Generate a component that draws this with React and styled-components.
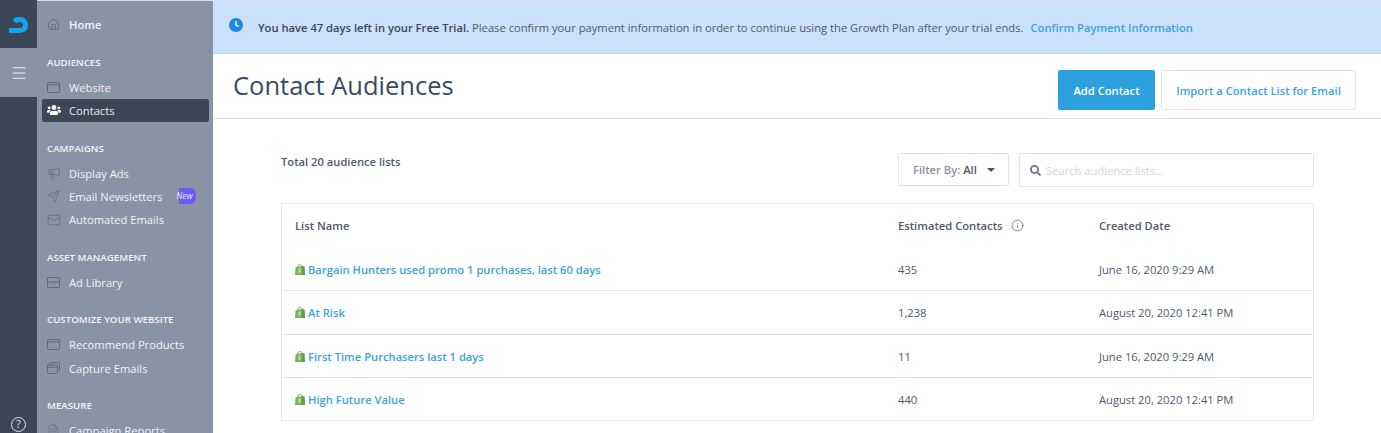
import styled, { createGlobalStyle } from "styled-components";
import { Home, Megaphone, Send, Mail, FileText, Menu, Info } from "lucide-react";
import { FaUsers, FaSearch } from "react-icons/fa";

const GlobalStyle = createGlobalStyle`
  html, body {
    margin: 0;
    padding: 0;
    height: 100%;
    overflow: hidden;
    background: #fff;
    font-family: "Open Sans", "Noto Sans", sans-serif;
  }
  * { box-sizing: border-box; }
`;

const rows = [
  { name: "Bargain Hunters used promo 1 purchases, last 60 days", count: "435", date: "June 16, 2020 9:29 AM" },
  { name: "At Risk", count: "1,238", date: "August 20, 2020 12:41 PM" },
  { name: "First Time Purchasers last 1 days", count: "11", date: "June 16, 2020 9:29 AM" },
  { name: "High Future Value", count: "440", date: "August 20, 2020 12:41 PM" },
];

const Shopify = () => (
  <svg width="10" height="11" viewBox="0 0 10 11">
    <path d="M0.6 3.2L6.5 2l3 .6.4 8.4H0z" fill="#7ab55c" />
    <path d="M7 2.2V11h2.9L9.4 2.6z" fill="#5e9e46" />
    <path d="M2.8 3C2.8 1 3.8 0.3 5 0.3S7 1 7 2.8" stroke="#7ab55c" strokeWidth="1" fill="none" />
    <path d="M5.6 5.2C4.6 4.8 3.5 5.2 3.8 6.1c.3.7 1.6.7 1.4 1.6-.2.7-1.2.6-1.9.3" stroke="#fff" strokeWidth="0.9" fill="none" />
  </svg>
);

const Logo = () => (
  <svg width="20" height="18" viewBox="0 0 20 18">
    <path
      d="M3.5 3.5C5.5 1.5 8 1 10.5 1 15.5 1 19 4 19 9s-3.5 8-8.5 8H0v-5h10.5c2 0 3.5-1 3.5-3s-1.5-3-3.5-3C9 6 8 6.5 7 7.5z"
      fill="#12a5e8"
    />
  </svg>
);

const ClockIcon = () => (
  <svg width="14" height="14" viewBox="0 0 14 14">
    <circle cx="7" cy="7" r="7" fill="#1e88e5" />
    <path d="M7 3v4.2l2.6 1.2" stroke="#fff" strokeWidth="1.4" fill="none" />
  </svg>
);

const WebsiteIcon = () => (
  <svg width="13" height="11" viewBox="0 0 13 11" fill="none" stroke="currentColor" strokeWidth="0.8">
    <rect x="0.5" y="0.5" width="12" height="10" rx="1" />
    <path d="M0.5 2.8h12" />
  </svg>
);

const LibraryIcon = () => (
  <svg width="13" height="11" viewBox="0 0 13 11" fill="none" stroke="currentColor" strokeWidth="0.8">
    <rect x="0.5" y="0.5" width="12" height="10" rx="1" />
    <path d="M0.5 5h12M5 5l1.5 1.2L8 5" />
  </svg>
);

const StackIcon = () => (
  <svg width="13" height="12" viewBox="0 0 13 12" fill="none" stroke="currentColor" strokeWidth="0.8">
    <rect x="0.5" y="3" width="10" height="8.5" rx="1" />
    <path d="M0.5 5.2h10M3 3V1.6q0-1 1-1h7.5q1 0 1 1V8q0 1-1 1h-1" />
  </svg>
);

export default function App() {
  return (
    <Page>
      <GlobalStyle />
      <Rail>
        <LogoCell><Logo /></LogoCell>
        <MenuCell><Menu size={18} strokeWidth={1.4} /></MenuCell>
        <HelpIcon>?</HelpIcon>
      </Rail>
      <Sidebar>
        <HomeRow>
          <Home size={13} strokeWidth={1} />
          <span>Home</span>
        </HomeRow>
        <Section>
          <SectionTitle>AUDIENCES</SectionTitle>
          <NavItem><IconSlot><WebsiteIcon /></IconSlot><span>Website</span></NavItem>
          <NavItem $active><IconSlot><FaUsers size={14} /></IconSlot><span>Contacts</span></NavItem>
        </Section>
        <Section>
          <SectionTitle>CAMPAIGNS</SectionTitle>
          <NavItem><IconSlot><Megaphone size={14} strokeWidth={1} /></IconSlot><span>Display Ads</span></NavItem>
          <NavItem>
            <IconSlot><Send size={13} strokeWidth={1} /></IconSlot><span>Email Newsletters</span>
            <NewBadge>New</NewBadge>
          </NavItem>
          <NavItem><IconSlot><Mail size={14} strokeWidth={1} /></IconSlot><span>Automated Emails</span></NavItem>
        </Section>
        <Section>
          <SectionTitle>ASSET MANAGEMENT</SectionTitle>
          <NavItem><IconSlot><LibraryIcon /></IconSlot><span>Ad Library</span></NavItem>
        </Section>
        <Section>
          <SectionTitle>CUSTOMIZE YOUR WEBSITE</SectionTitle>
          <NavItem><IconSlot><WebsiteIcon /></IconSlot><span>Recommend Products</span></NavItem>
          <NavItem><IconSlot><StackIcon /></IconSlot><span>Capture Emails</span></NavItem>
        </Section>
        <Section>
          <SectionTitle>MEASURE</SectionTitle>
          <NavItem><IconSlot><FileText size={13} strokeWidth={1} /></IconSlot><span>Campaign Reports</span></NavItem>
        </Section>
      </Sidebar>
      <Main>
        <Banner>
          <ClockIcon />
          <BannerText>
            <strong>You have 47 days left in your Free Trial.</strong> Please confirm your payment information in order to continue using the Growth Plan after your trial ends.
            <BannerLink>Confirm Payment Information</BannerLink>
          </BannerText>
        </Banner>
        <Header>
          <Title>Contact Audiences</Title>
          <Actions>
            <PrimaryButton>Add Contact</PrimaryButton>
            <SecondaryButton>Import a Contact List for Email</SecondaryButton>
          </Actions>
        </Header>
        <Content>
          <Toolbar>
            <Total>Total 20 audience lists</Total>
            <FilterButton>
              Filter By: <b>All</b>
              <Caret />
            </FilterButton>
            <SearchBox>
              <FaSearch size={11} color="#6b7686" />
              <span>Search audience lists...</span>
            </SearchBox>
          </Toolbar>
          <Table>
            <HeadRow>
              <div>List Name</div>
              <HeadCell>
                Estimated Contacts
                <Info size={13} strokeWidth={1.3} />
              </HeadCell>
              <div>Created Date</div>
            </HeadRow>
            {rows.map((row) => (
              <Row key={row.name}>
                <NameCell><Shopify /><span>{row.name}</span></NameCell>
                <div>{row.count}</div>
                <div>{row.date}</div>
              </Row>
            ))}
          </Table>
        </Content>
      </Main>
    </Page>
  );
}

const Page = styled.div`
  position: relative;
  display: flex;
  width: 1381px;
  height: 433px;
  overflow: hidden;
  &::before {
    content: "";
    position: absolute;
    inset: 0 0 auto 0;
    height: 1px;
    background: #dfe3e6;
  }
`;

const Rail = styled.div`
  position: relative;
  flex: 0 0 37px;
  background: #3b4657;
`;

const LogoCell = styled.div`
  height: 48px;
  padding: 1px 0 0 0;
  display: flex;
  align-items: center;
  justify-content: center;
`;

const MenuCell = styled.div`
  height: 49px;
  display: flex;
  align-items: center;
  justify-content: center;
  background: #8894a5;
  color: #eef1f4;
`;

const HelpIcon = styled.div`
  position: absolute;
  left: 11px;
  bottom: 1px;
  width: 15px;
  height: 15px;
  border: 1px solid #e4e8ec;
  border-radius: 50%;
  color: #e4e8ec;
  font-size: 10px;
  line-height: 13px;
  text-align: center;
`;

const Sidebar = styled.nav`
  flex: 0 0 176px;
  background: #8894a5;
  color: #f1f3f6;
  padding: 0 4px 0 5px;
`;

const HomeRow = styled.div`
  height: 49px;
  padding-left: 5px;
  display: flex;
  align-items: center;
  gap: 8px;
  font-size: 11.2px;
  font-weight: 600;
  svg { color: #414c5d; margin-right: 1px; }
`;

const Section = styled.section`
  margin-bottom: 12.8px;
`;

const SectionTitle = styled.div`
  height: 26.5px;
  padding-left: 5px;
  display: flex;
  align-items: center;
  font-size: 9.7px;
  font-weight: 550;
`;

const NavItem = styled.div`
  position: relative;
  height: 23.3px;
  padding-left: 5px;
  display: flex;
  align-items: center;
  gap: 8px;
  font-size: 11.2px;
  border-radius: 2px;
  background: ${(p) => (p.$active ? "#3b4657" : "transparent")};
  color: ${(p) => (p.$active ? "#e8ebef" : "#f1f3f6")};
  svg { color: ${(p) => (p.$active ? "#fff" : "#556072")}; }
`;

const IconSlot = styled.span`
  flex: 0 0 14px;
  display: flex;
  align-items: center;
  justify-content: flex-start;
`;

const NewBadge = styled.span`
  position: absolute;
  left: 131px;
  top: 3px;
  width: 23px;
  height: 16px;
  border-radius: 0 5px 5px 0;
  background: linear-gradient(90deg, transparent 25%, #6a5cf0 25%);
  color: #e6e4ff;
  font-size: 8.5px;
  font-style: italic;
  line-height: 16px;
  text-align: center;
`;

const Main = styled.main`
  flex: 1;
  min-width: 0;
`;

const Banner = styled.div`
  height: 54px;
  padding: 18px 0 0 16px;
  display: flex;
  gap: 15px;
  background: #cbe1f9;
  border-bottom: 1px solid #b5d8f0;
  svg { flex: none; }
`;

const BannerText = styled.div`
  font-size: 11.2px;
  line-height: 20px;
  color: #4e5a6b;
  strong { font-weight: 600; color: #3b4657; }
`;

const BannerLink = styled.a`
  margin-left: 7px;
  font-weight: 600;
  color: #3aa3e0;
`;

const Header = styled.header`
  height: 65px;
  padding: 15px 25px 0 20px;
  display: flex;
  justify-content: space-between;
  border-bottom: 1px solid #e3e5e8;
`;

const Title = styled.h1`
  margin: 0;
  font-size: 25.5px;
  font-weight: 400;
  line-height: 32px;
  color: #3a4a60;
`;

const Actions = styled.div`
  display: flex;
  gap: 6px;
  margin-top: 1px;
`;

const PrimaryButton = styled.button`
  width: 97px;
  height: 40px;
  border: none;
  border-radius: 2px;
  background: #2da0df;
  color: #fff;
  font: 600 11.2px "Open Sans", sans-serif;
`;

const SecondaryButton = styled.button`
  width: 195px;
  height: 40px;
  border: 1px solid #e3e5e8;
  border-radius: 2px;
  background: #fff;
  color: #3aa3e0;
  font: 600 11.2px "Open Sans", sans-serif;
`;

const Content = styled.div`
  padding: 34px 67px 0 68px;
`;

const Toolbar = styled.div`
  display: flex;
  align-items: flex-start;
  height: 50px;
`;

const Total = styled.div`
  width: 617px;
  font-size: 11.2px;
  font-weight: 600;
  line-height: 18px;
  color: #4f5a6a;
`;

const FilterButton = styled.div`
  width: 111px;
  height: 33px;
  margin-right: 10px;
  padding-left: 14px;
  display: flex;
  align-items: center;
  border: 1px solid #e3e5e8;
  border-radius: 2px;
  font-size: 11.2px;
  font-weight: 600;
  color: #8690a0;
  white-space: pre;
  b { font-weight: 600; color: #4f5a6a; }
`;

const Caret = styled.i`
  margin-left: 10px;
  border: 4px solid transparent;
  border-top: 4px solid #4a5565;
  border-bottom: none;
`;

const SearchBox = styled.div`
  flex: 1;
  height: 34px;
  padding-left: 10px;
  display: flex;
  align-items: center;
  gap: 5px;
  border: 1px solid #e3e5e8;
  border-radius: 2px;
  font-size: 11.2px;
  color: #d0d4da;
`;

const Table = styled.div`
  border: 1px solid #e3e5e8;
  border-bottom: none;
  font-size: 11.2px;
`;

const HeadRow = styled.div`
  display: grid;
  grid-template-columns: 603px 201px 1fr;
  height: 43px;
  padding-left: 13px;
  align-items: center;
  font-weight: 600;
  color: #4f5a6a;
`;

const HeadCell = styled.div`
  display: flex;
  align-items: center;
  gap: 8px;
`;

const Row = styled.div`
  display: grid;
  grid-template-columns: 603px 201px 1fr;
  height: 43px;
  padding: 1px 0 0 13px;
  align-items: center;
  color: #4e5a6b;
  border-bottom: 1px solid #e3e5e8;
  &:nth-child(-n + 3) { height: 44px; }
  &:nth-child(3) { padding-top: 0; }
`;

const NameCell = styled.div`
  display: flex;
  align-items: center;
  gap: 3px;
  font-weight: 600;
  color: #3aa3e0;
`;
